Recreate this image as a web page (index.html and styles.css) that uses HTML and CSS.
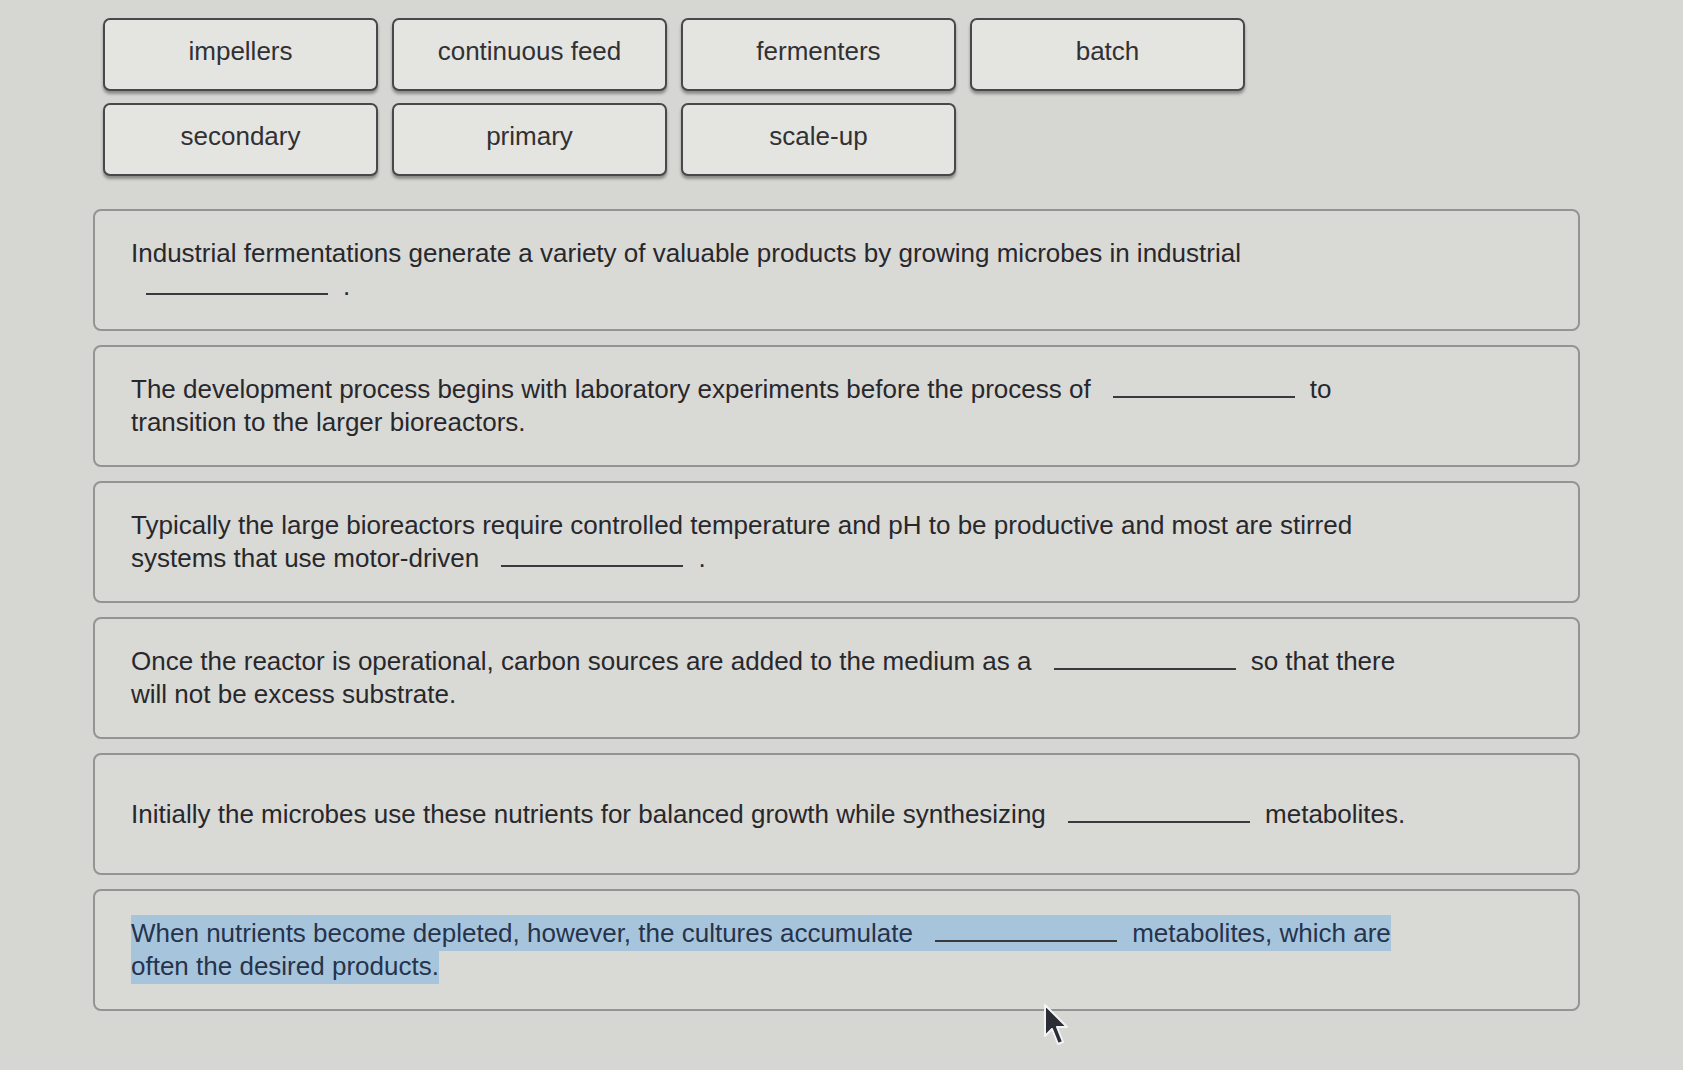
FILE: index.html
```html
<!DOCTYPE html>
<html lang="en">
<head>
<meta charset="utf-8">
<title>Fermentation labeling</title>
<link rel="stylesheet" href="styles.css">
</head>
<body>
<main class="page">
  <div class="bank">
    <div class="chip">impellers</div>
    <div class="chip">continuous feed</div>
    <div class="chip">fermenters</div>
    <div class="chip">batch</div>
    <div class="chip">secondary</div>
    <div class="chip">primary</div>
    <div class="chip">scale-up</div>
  </div>

  <div class="sentences">
    <div class="sentence"><p class="stext">Industrial fermentations generate a variety of valuable products by growing microbes in industrial <span class="blank"></span>.</p></div>
    <div class="sentence"><p class="stext">The development process begins with laboratory experiments before the process of <span class="blank"></span>to transition to the larger bioreactors.</p></div>
    <div class="sentence"><p class="stext">Typically the large bioreactors require controlled temperature and pH to be productive and most are stirred systems that use motor-driven <span class="blank"></span>.</p></div>
    <div class="sentence"><p class="stext">Once the reactor is operational, carbon sources are added to the medium as a <span class="blank"></span>so that there will not be excess substrate.</p></div>
    <div class="sentence"><p class="stext">Initially the microbes use these nutrients for balanced growth while synthesizing <span class="blank"></span>metabolites.</p></div>
    <div class="sentence"><p class="stext"><span class="sel">When nutrients become depleted, however, the cultures accumulate <span class="blank"></span>metabolites, which are often the desired products.</span></p></div>
  </div>

  <svg class="cursor" width="30" height="46" viewBox="0 0 30 46" aria-hidden="true">
    <path d="M2 2 L2 33 L9 26 L15 41 L20 39 L14 24 L24 24 Z" fill="#2a2d36" stroke="#f4f4f4" stroke-width="2" stroke-linejoin="round"/>
  </svg>
</main>
</body>
</html>
```

FILE: styles.css
```css
html, body {
  margin: 0;
  padding: 0;
}

body {
  background: #d6d6d2;
  font-family: "Liberation Sans", Arial, sans-serif;
  color: #28282c;
  width: 1683px;
  height: 1070px;
  overflow: hidden;
}

.page {
  position: relative;
  padding: 18px 0 0 93px;
}

.bank {
  display: grid;
  grid-template-columns: repeat(4, 275px);
  column-gap: 14px;
  row-gap: 12px;
  margin-left: 10px;
}

.chip {
  height: 73px;
  box-sizing: border-box;
  border: 2px solid #48484a;
  border-radius: 7px;
  background: #e4e4e1;
  box-shadow: 0 3px 3px rgba(0, 0, 0, 0.35);
  display: flex;
  align-items: center;
  justify-content: center;
  padding-bottom: 6px;
  font-size: 26px;
  color: #313134;
}

.sentences {
  margin-top: 33px;
  display: flex;
  flex-direction: column;
  gap: 14px;
  width: 1487px;
}

.sentence {
  box-sizing: border-box;
  min-height: 122px;
  border: 2px solid #949494;
  border-radius: 8px;
  background: #d9d9d6;
  display: flex;
  align-items: center;
  padding: 0 147px 0 36px;
}

.stext {
  margin: 0;
  font-size: 26px;
  line-height: 33px;
}

.blank {
  display: inline-block;
  width: 182px;
  height: 20px;
  border-bottom: 2px solid #3a3a3e;
  margin: 0 15px 0 15px;
  vertical-align: baseline;
}

.sel {
  background: #a6c5dd;
  color: #27334a;
  padding: 3px 0;
}

.cursor {
  position: absolute;
  left: 1043px;
  top: 1003px;
}
```
